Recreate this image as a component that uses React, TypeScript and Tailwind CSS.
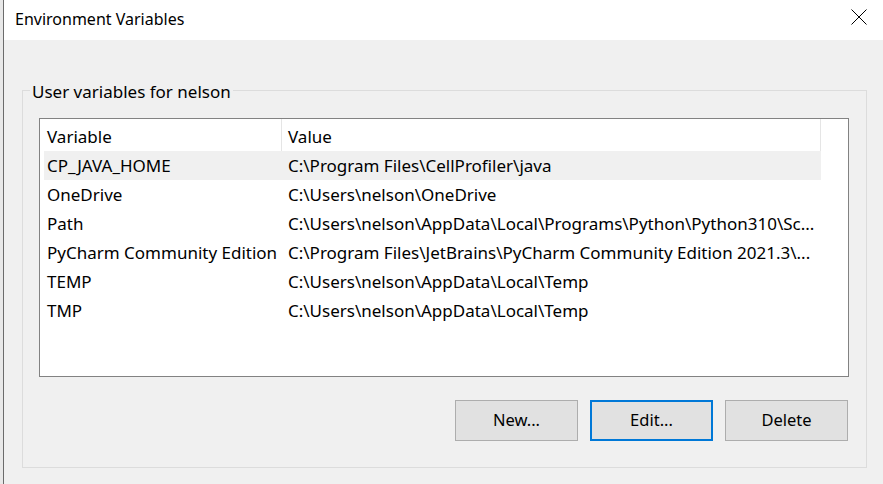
import React from 'react';

const FONT = { fontFamily: '"Segoe UI", "Noto Sans", "Open Sans", sans-serif' };

const ROWS = [
  { name: 'CP_JAVA_HOME', value: 'C:\\Program Files\\CellProfiler\\java' },
  { name: 'OneDrive', value: 'C:\\Users\\nelson\\OneDrive' },
  { name: 'Path', value: 'C:\\Users\\nelson\\AppData\\Local\\Programs\\Python\\Python310\\Sc...' },
  { name: 'PyCharm Community Edition', value: 'C:\\Program Files\\JetBrains\\PyCharm Community Edition 2021.3\\...' },
  { name: 'TEMP', value: 'C:\\Users\\nelson\\AppData\\Local\\Temp' },
  { name: 'TMP', value: 'C:\\Users\\nelson\\AppData\\Local\\Temp' },
];

function Button({ label, focused }: { label: string; focused?: boolean }) {
  return (
    <button
      className={`w-[123px] h-[41px] bg-[#e1e1e1] text-[16.5px] text-black ${
        focused ? 'border-2 border-[#0078d7]' : 'border border-[#adadad]'
      }`}
    >
      {label}
    </button>
  );
}

export default function App() {
  return (
    <div className="w-[883px] h-[484px] flex overflow-hidden bg-[#f0f0f0]" style={FONT}>
      <div className="w-[4px] bg-[#e8e8e8] border-r border-[#6b6b6b]" />
      <div className="flex-1 flex flex-col">
        <div className="h-[40px] bg-white flex items-center justify-between pl-[11px] pr-[16px]">
          <span className="text-[16px] text-black -mt-[3px]">Environment Variables</span>
          <svg width="16" height="16" viewBox="0 0 16 16" className="-mt-[6px]">
            <path d="M0.5 0.5 L15.5 15.5 M15.5 0.5 L0.5 15.5" stroke="#000" strokeWidth="1" fill="none" />
          </svg>
        </div>
        <div className="flex-1 bg-[#f0f0f0] pt-[50px] pl-[18px]">
          <div className="relative w-[845px] h-[378px] border border-[#dcdcdc] pl-[16px] pt-[27px]">
            <span className="absolute left-[7px] -top-[11px] bg-[#f0f0f0] px-[2px] text-[17px] text-black leading-[24px]">
              User variables for nelson
            </span>
            <div className="w-[810px] h-[259px] bg-white border border-[#828282] text-[17px] text-black">
              <div className="flex h-[32px] w-[781px] border-r border-[#e5e5e5]">
                <div className="w-[242px] border-r border-[#e5e5e5] pl-[7px] pt-[3px] flex items-center">Variable</div>
                <div className="flex-1 pl-[6px] pt-[3px] flex items-center">Value</div>
              </div>
              {ROWS.map((r, i) => (
                <div
                  key={r.name}
                  className={`flex h-[29px] items-center ml-[4px] w-[777px] whitespace-nowrap ${
                    i === 0 ? 'bg-[#f0f0f0]' : ''
                  }`}
                >
                  <div className="w-[238px] pl-[3px] overflow-hidden">{r.name}</div>
                  <div className="flex-1 pl-[6px] overflow-hidden">{r.value}</div>
                </div>
              ))}
            </div>
            <div className="flex justify-end gap-[12px] w-[809px] mt-[23px]">
              <Button label="New..." />
              <Button label="Edit..." focused />
              <Button label="Delete" />
            </div>
          </div>
        </div>
      </div>
    </div>
  );
}
